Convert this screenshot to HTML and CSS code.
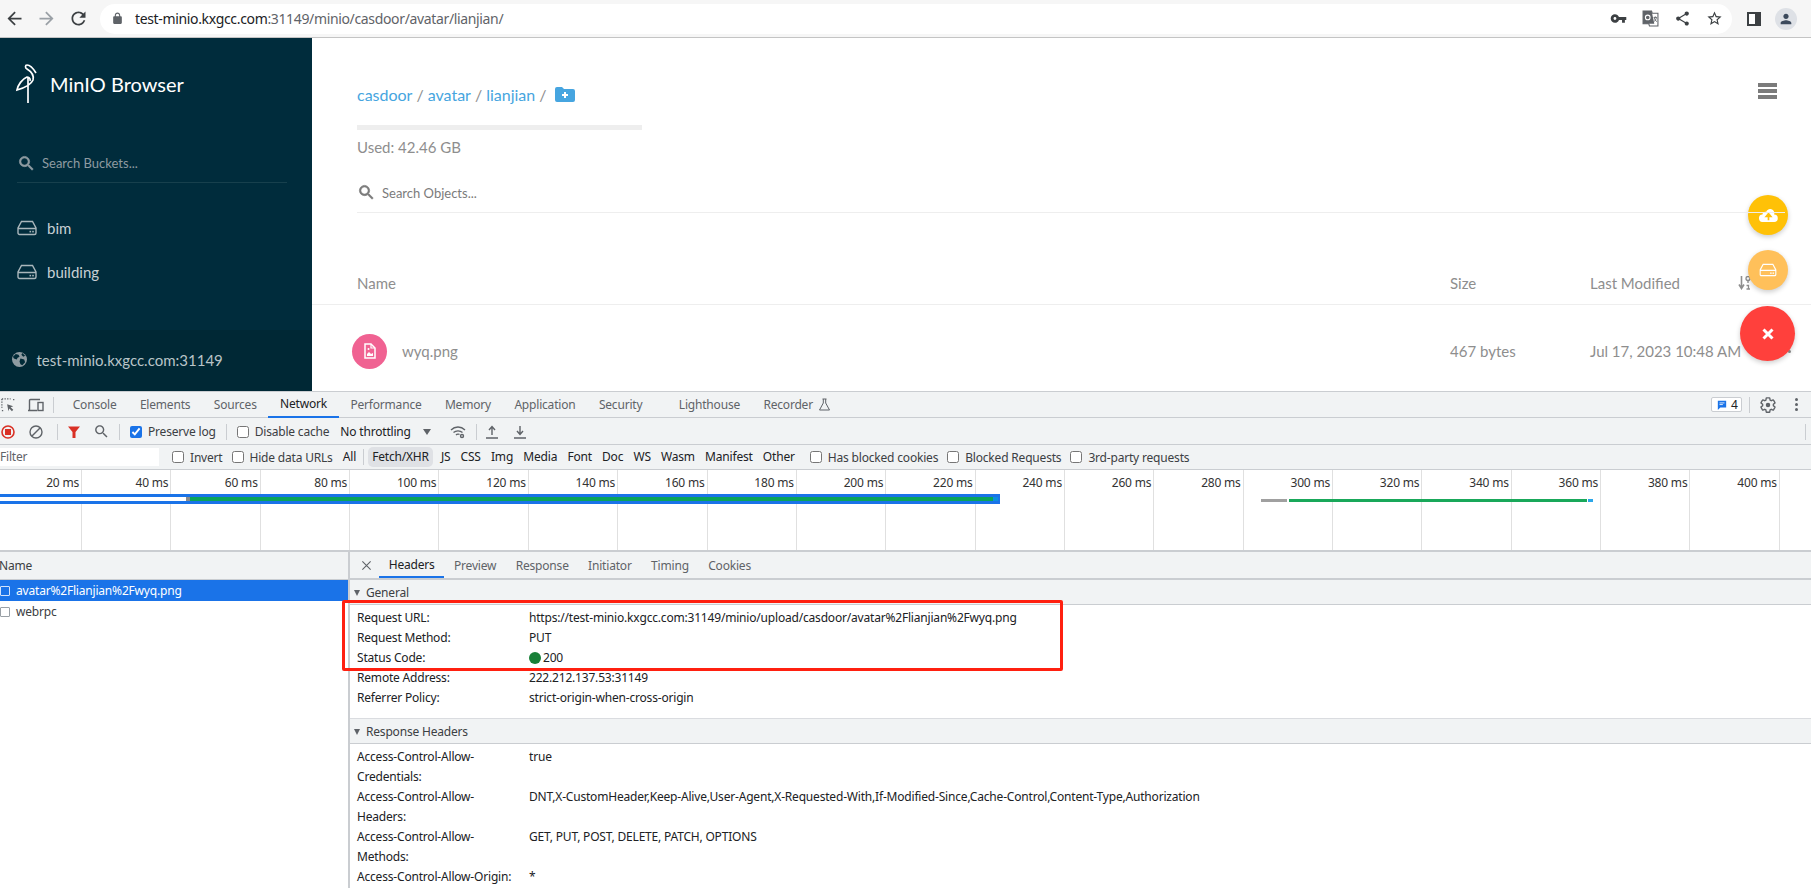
FILE: index.html
```html
<!DOCTYPE html>
<html lang="en">
<head>
    <meta charset="UTF-8">
    <meta name="viewport" content="width=device-width, initial-scale=1.0">
    <title>MinIO Browser</title>
    <link rel="stylesheet" href="styles.css">
</head>
<body>
    <svg class="defs" width="0" height="0">
        <symbol id="i-search" viewBox="0 0 24 24"><path d="M15.5 14h-.79l-.28-.27C15.41 12.59 16 11.11 16 9.5 16 5.91 13.09 3 9.5 3S3 5.91 3 9.5 5.91 16 9.5 16c1.61 0 3.09-.59 4.23-1.57l.27.28v.79l5 4.99L20.49 19l-4.99-5zm-6 0C7.01 14 5 11.99 5 9.5S7.01 5 9.5 5 14 7.01 14 9.5 11.99 14 9.5 14z"/></symbol>
        <symbol id="i-drive" viewBox="0 0 20 16"><path d="M4.5 1.5h11L19 8v5a1.5 1.5 0 0 1-1.5 1.5h-15A1.5 1.5 0 0 1 1 13V8zM1 8.5h18" fill="none" stroke="currentColor" stroke-width="1.4"/><rect x="12.5" y="10.8" width="1.6" height="1.6" fill="currentColor"/><rect x="15.2" y="10.8" width="1.6" height="1.6" fill="currentColor"/></symbol>
    </svg>

    <header class="chrome-bar">
        <svg class="chrome-icon" viewBox="0 0 24 24"><path d="M20 11H7.83l5.59-5.59L12 4l-8 8 8 8 1.41-1.41L7.83 13H20v-2z"/></svg>
        <svg class="chrome-icon off" viewBox="0 0 24 24"><path d="M4 11h12.17l-5.59-5.59L12 4l8 8-8 8-1.41-1.41L16.17 13H4v-2z"/></svg>
        <svg class="chrome-icon" viewBox="0 0 24 24"><path d="M17.65 6.35C16.2 4.9 14.21 4 12 4c-4.42 0-7.99 3.58-7.99 8s3.57 8 7.99 8c3.73 0 6.84-2.55 7.73-6h-2.08c-.82 2.33-3.04 4-5.65 4-3.31 0-6-2.69-6-6s2.69-6 6-6c1.66 0 3.14.69 4.22 1.78L13 11h7V4l-2.35 2.35z"/></svg>
        <div class="omnibox">
            <svg class="lock" viewBox="0 0 24 24"><path d="M18 8h-1V6c0-2.76-2.24-5-5-5S7 3.24 7 6v2H6c-1.1 0-2 .9-2 2v10c0 1.1.9 2 2 2h12c1.1 0 2-.9 2-2V10c0-1.1-.9-2-2-2zM9 6c0-1.66 1.34-3 3-3s3 1.34 3 3v2H9V6z"/></svg>
            <span class="url"><b>test-minio.kxgcc.com</b>:31149/minio/casdoor/avatar/lianjian/</span>
            <div class="omni-icons">
                <svg class="omni-icon" viewBox="0 0 24 24"><path d="M12.65 10C11.83 7.67 9.61 6 7 6c-3.31 0-6 2.69-6 6s2.69 6 6 6c2.61 0 4.83-1.67 5.65-4H17v4h4v-4h2v-4H12.65zM7 14c-1.1 0-2-.9-2-2s.9-2 2-2 2 .9 2 2-.9 2-2 2z"/></svg>
                <svg class="omni-icon" viewBox="0 0 16 16"><path d="M1 1h8l.6 2H15v12H7l-.6-2H1z" fill="#fff" stroke="#5f6368" stroke-width="1"/><path d="M1 1h8l2.6 12H1z" fill="#5f6368"/><circle cx="5.4" cy="7" r="2.2" fill="none" stroke="#fff" stroke-width="1"/><path d="M11 7h3M12.5 6v1M11.5 7c.3 2 1.5 3.4 2.6 4M13.6 7c-.3 2-1.5 3.4-2.4 4" fill="none" stroke="#5f6368" stroke-width=".8"/></svg>
                <svg class="omni-icon" viewBox="0 0 24 24"><path d="M18 16.08c-.76 0-1.44.3-1.96.77L8.91 12.7c.05-.23.09-.46.09-.7s-.04-.47-.09-.7l7.05-4.11c.54.5 1.25.81 2.04.81 1.66 0 3-1.34 3-3s-1.34-3-3-3-3 1.34-3 3c0 .24.04.47.09.7L8.04 9.81C7.5 9.31 6.79 9 6 9c-1.66 0-3 1.34-3 3s1.34 3 3 3c.79 0 1.5-.31 2.04-.81l7.12 4.16c-.05.21-.08.43-.08.65 0 1.61 1.31 2.92 2.92 2.92 1.61 0 2.92-1.31 2.92-2.92s-1.31-2.92-2.92-2.92z"/></svg>
                <svg class="omni-icon" viewBox="0 0 24 24"><path d="M22 9.24l-7.19-.62L12 2 9.19 8.63 2 9.24l5.46 4.73L5.82 21 12 17.27 18.18 21l-1.63-7.03L22 9.24zM12 15.4l-3.76 2.27 1-4.28-3.32-2.88 4.38-.38L12 6.1l1.71 4.04 4.38.38-3.32 2.88 1 4.28L12 15.4z"/></svg>
            </div>
        </div>
        <div class="side-panel-btn"><span></span></div>
        <div class="avatar">
            <svg viewBox="0 0 24 24"><path d="M12 12c2.21 0 4-1.79 4-4s-1.79-4-4-4-4 1.79-4 4 1.79 4 4 4zm0 2c-2.67 0-8 1.34-8 4v2h16v-2c0-2.66-5.33-4-8-4z"/></svg>
        </div>
    </header>

    <div class="app">
        <aside class="sidebar">
            <div class="brand">
                <svg class="logo" viewBox="0 0 24 44"><path d="M21 11C18 6 15 3 12 3c-2 0-2 3 0 4 5 3 7 7 6 11-2 5-9 8-16 10 1-5 5-11 10-13 1 0 4 1 3 4M13 16v25" fill="none" stroke="#fff" stroke-width="1.7"/></svg>
                <span>MinIO Browser</span>
            </div>
            <div class="bucket-search">
                <svg class="search-icon" viewBox="0 0 24 24"><use href="#i-search"/></svg>
                <span>Search Buckets...</span>
            </div>
            <ul class="buckets">
                <li><svg class="drive" viewBox="0 0 20 16"><use href="#i-drive"/></svg>bim</li>
                <li><svg class="drive" viewBox="0 0 20 16"><use href="#i-drive"/></svg>building</li>
            </ul>
            <div class="host">
                <svg class="globe" viewBox="0 0 16 16"><circle cx="8" cy="8" r="8" fill="#8e9ba1"/><path d="M4 2l3 1 1 2-2 1-1 2-3-1-1-2zM9 7l4 1 1 3-3 3-2-1-1-3zM11 1l3 3-2 1-2-2z" fill="#002a37"/></svg>
                <span>test-minio.kxgcc.com:31149</span>
            </div>
        </aside>

        <main class="content">
            <div class="head">
                <div class="crumbs">
                    <a>casdoor</a><i>/</i><a>avatar</a><i>/</i><a>lianjian</a><i>/</i>
                    <svg class="new-folder" viewBox="0 0 20 15"><path d="M0 2a2 2 0 0 1 2-2h5l2 2h9a2 2 0 0 1 2 2v9a2 2 0 0 1-2 2H2a2 2 0 0 1-2-2z" fill="#46a5e0"/><path d="M10 5v6M7 8h6" stroke="#fff" stroke-width="2"/></svg>
                </div>
                <div class="hamburger"><span></span><span></span><span></span></div>
            </div>
            <div class="usage-bar"></div>
            <div class="usage">Used: 42.46 GB</div>
            <div class="object-search">
                <svg class="search-icon" viewBox="0 0 24 24"><use href="#i-search"/></svg>
                <span>Search Objects...</span>
            </div>
            <div class="table-head">
                <div class="col-name">Name</div>
                <div class="col-size">Size</div>
                <div class="col-date">Last Modified</div>
                <svg class="sort" viewBox="0 0 13 14"><path d="M3.5 0v11M1 8.5l2.5 4 2.5-4" fill="none" stroke="#8e8e8e" stroke-width="1.6"/><circle cx="10" cy="2.5" r="2" fill="none" stroke="#8e8e8e" stroke-width="1.3"/><path d="M10 5v2M8.5 9.5h2V13M8.5 13H12" fill="none" stroke="#8e8e8e" stroke-width="1.3"/></svg>
            </div>
            <div class="table-row">
                <div class="col-name file">
                    <span class="file-icon">
                        <svg viewBox="0 0 12 16"><path d="M1 1h6l4 4v10H1z" fill="none" stroke="#fff" stroke-width="1.5"/><path d="M7 1v4h4" fill="none" stroke="#fff" stroke-width="1.2"/><path d="M3 13v-2l2-2 2 2 2-1v3z" fill="#fff"/><circle cx="4.5" cy="6" r="1" fill="#fff"/></svg>
                    </span>
                    <span>wyq.png</span>
                </div>
                <div class="col-size">467 bytes</div>
                <div class="col-date">Jul 17, 2023 10:48 AM</div>
                <span class="more-dot"></span>
            </div>

            <button class="fab fab-upload">
                <svg viewBox="0 0 20 14"><path d="M16 6a4.5 4.5 0 0 0-8.5-3A3.5 3.5 0 0 0 3.5 6 3.5 3.5 0 0 0 4 14h12a4 4 0 0 0 0-8z" fill="#fff"/><path d="M10 12V6M7.5 8L10 5l2.5 3z" stroke="#ffc107" stroke-width="1.8" fill="#ffc107"/></svg>
            </button>
            <button class="fab fab-bucket">
                <svg viewBox="0 0 20 16"><use href="#i-drive"/></svg>
            </button>
            <button class="fab fab-close">
                <svg viewBox="0 0 12 12"><path d="M1.5 1.5l9 9M10.5 1.5l-9 9" stroke="#fff" stroke-width="3"/></svg>
            </button>
        </main>
    </div>

    <section class="devtools">
        <div class="dt-tabs">
            <svg class="dt-icon" viewBox="0 0 16 16"><path d="M1 1h10M1 1v10" fill="none" stroke="#5f6368" stroke-width="1.5" stroke-dasharray="1.5 1.5"/><path d="M1 14.5h3M14.5 1v3" fill="none" stroke="#5f6368" stroke-width="1.5" stroke-dasharray="1.5 1.5"/><path d="M7 7l7 2.5-3 1 3 3-1.5 1.5-3-3-1 3z" fill="#5f6368"/></svg>
            <svg class="dt-icon device" viewBox="0 0 16 14"><path d="M1.5 12V2.5a1 1 0 0 1 1-1H12M0 12.5h9" fill="none" stroke="#5f6368" stroke-width="1.4"/><rect x="10" y="4.5" width="5" height="8" fill="none" stroke="#5f6368" stroke-width="1.4"/></svg>
            <span class="dt-sep"></span>
            <a class="dt-tab">Console</a>
            <a class="dt-tab">Elements</a>
            <a class="dt-tab">Sources</a>
            <a class="dt-tab active">Network</a>
            <a class="dt-tab">Performance</a>
            <a class="dt-tab">Memory</a>
            <a class="dt-tab">Application</a>
            <a class="dt-tab">Security</a>
            <a class="dt-tab lighthouse">Lighthouse</a>
            <a class="dt-tab">Recorder
                <svg class="flask" viewBox="0 0 12 13"><path d="M4 1h4M4.8 1v4L1 12h10L7.2 5V1" fill="none" stroke="#5f6368" stroke-width="1"/></svg>
            </a>
            <div class="dt-right">
                <span class="issues"><svg viewBox="0 0 12 12"><path d="M1 1h10v8H4l-3 3z" fill="#1a73e8"/><path d="M3 3.5h6M3 5.5h4" stroke="#fff"/></svg>4</span>
                <span class="dt-sep"></span>
                <svg class="gear" viewBox="0 0 24 24"><path d="M19.14 12.94c.04-.3.06-.61.06-.94 0-.32-.02-.64-.07-.94l2.03-1.58c.18-.14.23-.41.12-.61l-1.92-3.32c-.12-.22-.37-.29-.59-.22l-2.39.96c-.5-.38-1.03-.7-1.62-.94l-.36-2.54c-.04-.24-.24-.41-.48-.41h-3.84c-.24 0-.43.17-.47.41l-.36 2.54c-.59.24-1.13.57-1.62.94l-2.39-.96c-.22-.08-.47 0-.59.22L2.74 8.87c-.12.21-.08.47.12.61l2.03 1.58c-.05.3-.09.63-.09.94s.02.64.07.94l-2.03 1.58c-.18.14-.23.41-.12.61l1.92 3.32c.12.22.37.29.59.22l2.39-.96c.5.38 1.03.7 1.62.94l.36 2.54c.05.24.24.41.48.41h3.84c.24 0 .44-.17.47-.41l.36-2.54c.59-.24 1.13-.56 1.62-.94l2.39.96c.22.08.47 0 .59-.22l1.92-3.32c.12-.22.07-.47-.12-.61l-2.01-1.58z" fill="none" stroke="#5f6368" stroke-width="1.8"/><circle cx="12" cy="12" r="3" fill="#5f6368"/></svg>
                <span class="kebab"><span></span><span></span><span></span></span>
            </div>
        </div>

        <div class="dt-toolbar">
            <svg class="tb-icon record" viewBox="0 0 14 14"><circle cx="7" cy="7" r="6" fill="none" stroke="#d93025" stroke-width="1.6"/><rect x="4" y="4" width="6" height="6" fill="#d93025"/></svg>
            <svg class="tb-icon" viewBox="0 0 14 14"><circle cx="7" cy="7" r="6" fill="none" stroke="#5f6368" stroke-width="1.4"/><path d="M3 11l8-8" stroke="#5f6368" stroke-width="1.4"/></svg>
            <span class="dt-sep"></span>
            <svg class="tb-icon funnel" viewBox="0 0 14 14"><path d="M1 1.5h12L8.5 7v6h-3V7z" fill="#d93025"/></svg>
            <svg class="tb-icon lens" viewBox="0 0 24 24"><use href="#i-search"/></svg>
            <span class="dt-sep"></span>
            <label class="check"><input type="checkbox" checked>Preserve log</label>
            <span class="dt-sep"></span>
            <label class="check"><input type="checkbox">Disable cache</label>
            <span class="throttle">No throttling</span>
            <span class="caret"></span>
            <svg class="tb-icon wifi" viewBox="0 0 16 14"><path d="M1 5c4-4 10-4 14 0M3.5 7.5c2.5-2.3 6.5-2.3 9 0M6 10c1-1 3-1 3.5-.5" fill="none" stroke="#5f6368" stroke-width="1.3"/><circle cx="12" cy="11" r="2.2" fill="#5f6368"/><circle cx="12" cy="11" r=".8" fill="#f1f3f4"/></svg>
            <span class="dt-sep"></span>
            <svg class="tb-icon" viewBox="0 0 14 14"><path d="M7 10V2M4 5l3-3.5L10 5M1 13h12" fill="none" stroke="#5f6368" stroke-width="1.4"/></svg>
            <svg class="tb-icon" viewBox="0 0 14 14"><path d="M7 1v8M4 6l3 3.5L10 6M1 13h12" fill="none" stroke="#5f6368" stroke-width="1.4"/></svg>
            <span class="dt-sep end"></span>
        </div>

        <div class="dt-filter">
            <div class="filter-input">Filter</div>
            <label class="check"><input type="checkbox">Invert</label>
            <label class="check"><input type="checkbox">Hide data URLs</label>
            <div class="types">
                <span>All</span><span class="dt-sep"></span><span class="on">Fetch/XHR</span><span>JS</span><span>CSS</span><span>Img</span><span>Media</span><span>Font</span><span>Doc</span><span>WS</span><span>Wasm</span><span>Manifest</span><span>Other</span>
            </div>
            <label class="check"><input type="checkbox">Has blocked cookies</label>
            <label class="check"><input type="checkbox">Blocked Requests</label>
            <label class="check"><input type="checkbox">3rd-party requests</label>
        </div>

        <div class="timeline">
            <div class="tick">20 ms</div><div class="tick">40 ms</div><div class="tick">60 ms</div><div class="tick">80 ms</div><div class="tick">100 ms</div><div class="tick">120 ms</div><div class="tick">140 ms</div><div class="tick">160 ms</div><div class="tick">180 ms</div><div class="tick">200 ms</div><div class="tick">220 ms</div><div class="tick">240 ms</div><div class="tick">260 ms</div><div class="tick">280 ms</div><div class="tick">300 ms</div><div class="tick">320 ms</div><div class="tick">340 ms</div><div class="tick">360 ms</div><div class="tick">380 ms</div><div class="tick">400 ms</div>
            <!-- request bars sit on the time axis -->
            <div class="req-selected">
                <span class="seg-wait"></span><span class="seg-stall"></span><span class="seg-ttfb"></span><span class="seg-down"></span>
            </div>
            <div class="req-other">
                <span class="thin-grey"></span><span class="thin-green"></span><span class="thin-blue"></span>
            </div>
        </div>

        <div class="panes">
            <div class="req-list">
                <div class="list-head">Name</div>
                <div class="list-row selected"><span class="row-box"></span>avatar%2Flianjian%2Fwyq.png</div>
                <div class="list-row"><span class="row-box"></span>webrpc</div>
            </div>
            <div class="detail">
                <div class="detail-tabs">
                    <svg class="close-x" viewBox="0 0 12 12"><path d="M1.5 1.5l9 9M10.5 1.5l-9 9" stroke="#5f6368" stroke-width="1.2"/></svg>
                    <a class="detail-tab active">Headers</a>
                    <a class="detail-tab">Preview</a>
                    <a class="detail-tab">Response</a>
                    <a class="detail-tab">Initiator</a>
                    <a class="detail-tab">Timing</a>
                    <a class="detail-tab">Cookies</a>
                </div>
                <div class="sec-title first">General</div>
                <div class="sec-body">
                    <div class="kv"><div class="k">Request URL:</div><div class="v">https://test-minio.kxgcc.com:31149/minio/upload/casdoor/avatar%2Flianjian%2Fwyq.png</div></div>
                    <div class="kv"><div class="k">Request Method:</div><div class="v">PUT</div></div>
                    <div class="kv"><div class="k">Status Code:</div><div class="v"><span class="status-dot"></span>200</div></div>
                    <div class="kv"><div class="k">Remote Address:</div><div class="v">222.212.137.53:31149</div></div>
                    <div class="kv"><div class="k">Referrer Policy:</div><div class="v">strict-origin-when-cross-origin</div></div>
                </div>
                <div class="sec-title">Response Headers</div>
                <div class="sec-body">
                    <div class="kv"><div class="k">Access-Control-Allow-Credentials:</div><div class="v">true</div></div>
                    <div class="kv"><div class="k">Access-Control-Allow-Headers:</div><div class="v">DNT,X-CustomHeader,Keep-Alive,User-Agent,X-Requested-With,If-Modified-Since,Cache-Control,Content-Type,Authorization</div></div>
                    <div class="kv"><div class="k">Access-Control-Allow-Methods:</div><div class="v">GET, PUT, POST, DELETE, PATCH, OPTIONS</div></div>
                    <div class="kv"><div class="k">Access-Control-Allow-Origin:</div><div class="v">*</div></div>
                </div>
                <div class="red-box"></div>
            </div>
        </div>
    </section>
</body>
</html>
```

FILE: styles.css
```css
* {
    margin: 0;
    padding: 0;
    box-sizing: border-box;
}

html, body {
    width: 1811px;
    height: 888px;
    overflow: hidden;
    background-color: white;
}

.defs {
    position: absolute;
}

/* browser toolbar */
.chrome-bar {
    display: flex;
    align-items: center;
    height: 38px;
    padding: 0 14px 0 3.5px;
    background-color: #f6f6f6;
    border-bottom: 1px solid #c4c4c4;
    font-family: "Noto Sans", sans-serif;
}

.chrome-icon {
    width: 21px;
    height: 21px;
    margin-right: 11px;
    fill: #3c4043;
}

.chrome-icon.off {
    fill: #9aa0a6;
}

.omnibox {
    display: flex;
    align-items: center;
    width: 1632px;
    height: 30px;
    margin-left: 0.5px;
    padding-left: 11px;
    background-color: white;
    border-radius: 15px;
}

.lock {
    width: 13px;
    height: 13px;
    fill: #5f6368;
}

.url {
    margin-left: 11px;
    font-size: 14px;
    color: #5f6368;
    letter-spacing: -0.35px;
}

.url b {
    font-weight: 400;
    color: #202124;
}

.omni-icons {
    display: flex;
    gap: 15px;
    margin-left: auto;
    margin-right: 9px;
}

.omni-icon {
    width: 17px;
    height: 17px;
    fill: #3c4043;
}

.side-panel-btn {
    width: 14px;
    height: 14px;
    margin-left: 15px;
    padding: 2px 6px 2px 2px;
    background-color: #3c4043;
}

.side-panel-btn span {
    display: block;
    height: 100%;
    background-color: white;
}

.avatar {
    width: 22px;
    height: 22px;
    margin-left: 14px;
    padding: 3px;
    background-color: #dee1e6;
    border-radius: 50%;
}

.avatar svg {
    display: block;
    fill: #3c4a5c;
}

/* minio app */
.app {
    display: flex;
    height: 353px;
    font-family: Lato, sans-serif;
}

.sidebar {
    display: flex;
    flex-direction: column;
    flex: 0 0 312px;
    background-color: #002c3c;
    color: white;
}

.brand {
    display: flex;
    align-items: center;
    height: 44px;
    margin-top: 24px;
    padding-left: 15px;
    font-size: 20px;
}

.logo {
    width: 24px;
    height: 44px;
    margin-right: 11px;
}

.search-icon {
    width: 19px;
    height: 19px;
    fill: #8e8e8e;
    stroke: #8e8e8e;
    stroke-width: 0.8;
}

.bucket-search {
    display: flex;
    align-items: center;
    gap: 6px;
    height: 37px;
    margin: 40px 25px 0 17px;
    padding-bottom: 2px;
    border-bottom: 1px solid #17404d;
    font-size: 13px;
    color: #8e9ba1;
}

.bucket-search .search-icon {
    fill: #8e9ba1;
    stroke: #8e9ba1;
}

.buckets {
    margin-top: 23px;
    list-style: none;
}

.buckets li {
    display: flex;
    align-items: center;
    height: 44px;
    padding-left: 17px;
    font-size: 15px;
    color: #c7d0d4;
}

.drive {
    width: 20px;
    height: 16px;
    margin-right: 10px;
    color: #a9b6bb;
}

.host {
    display: flex;
    align-items: center;
    gap: 9.5px;
    height: 61px;
    margin-top: auto;
    padding: 0 0 2px 12px;
    background-color: #002835;
    font-size: 15px;
    color: #b9c4c8;
}

.globe {
    width: 15px;
    height: 15px;
}

.content {
    position: relative;
    flex: 1;
    overflow: hidden;
    color: #8e8e8e;
}

.head {
    display: flex;
    justify-content: space-between;
    padding: 45px 34px 0 45px;
}

.crumbs {
    display: flex;
    align-items: center;
    height: 24px;
    padding-bottom: 2px;
    font-size: 16px;
    color: #8e8e8e;
}

.crumbs a {
    color: #46a5e0;
}

.crumbs i {
    margin: 0 4px;
    font-style: normal;
}

.new-folder {
    width: 20px;
    height: 15px;
    margin-left: 5px;
}

.hamburger {
    display: flex;
    flex-direction: column;
    gap: 2.5px;
    width: 19px;
}

.hamburger span {
    height: 3.6px;
    background-color: #7b7b7b;
}

.usage-bar {
    width: 285px;
    height: 5px;
    margin: 18px 0 0 45px;
    background-color: #eee;
}

.usage {
    margin: 7px 0 0 45px;
    font-size: 15px;
    line-height: 20px;
}

.object-search {
    position: relative;
    z-index: 2;
    display: flex;
    align-items: center;
    gap: 6px;
    height: 38px;
    margin: 18px 26px 0 45px;
    padding-bottom: 2px;
    border-bottom: 1px solid #eee;
    font-size: 13px;
    color: #7b7b7b;
}

.object-search .search-icon {
    fill: #7b7b7b;
    stroke: #7b7b7b;
}

.table-head,
.table-row {
    display: flex;
    align-items: center;
    font-size: 15px;
}

.table-head {
    height: 92px;
    padding-top: 48px;
    border-bottom: 1px solid #eee;
}

.table-row {
    height: 92px;
}

.col-name {
    flex: 0 0 1138px;
    padding-left: 45px;
}

.col-name.file {
    display: flex;
    align-items: center;
    gap: 15px;
    padding-left: 40px;
}

.col-size {
    flex: 0 0 140px;
}

.col-date {
    flex: 0 0 148px;
    white-space: nowrap;
}

.sort {
    width: 13px;
    height: 14px;
}

.file-icon {
    display: flex;
    align-items: center;
    justify-content: center;
    width: 35px;
    height: 35px;
    background-color: #f06292;
    border-radius: 50%;
}

.file-icon svg {
    width: 12px;
    height: 16px;
}

.more-dot {
    width: 3px;
    height: 3px;
    margin-left: auto;
    margin-right: 20px;
    background-color: #8e8e8e;
    border-radius: 50%;
}

.fab {
    position: absolute;
    z-index: 1;
    display: flex;
    align-items: center;
    justify-content: center;
    right: 23px;
    width: 40px;
    height: 40px;
    border: none;
    border-radius: 50%;
    color: white;
    box-shadow: 0 2px 5px rgba(0,0,0,0.2);
}

.fab-upload {
    top: 157px;
    background-color: #ffc107;
}

.fab-upload svg {
    width: 19px;
    height: 13px;
}

.fab-bucket {
    top: 212px;
    background-color: #ffc05a;
}

.fab-bucket svg {
    width: 18px;
    height: 14px;
}

.fab-close {
    z-index: 3;
    top: 268px;
    right: 16px;
    width: 55px;
    height: 55px;
    background-color: #ff403c;
}

.fab-close svg {
    width: 12px;
    height: 12px;
}

/* devtools */
.devtools {
    display: flex;
    flex-direction: column;
    height: 497px;
    font-family: "Noto Sans", sans-serif;
    font-size: 12px;
    color: #202124;
    letter-spacing: -0.19px;
}

.dt-tabs,
.dt-toolbar,
.dt-filter {
    display: flex;
    align-items: center;
    background-color: #f1f3f4;
    border-bottom: 1px solid #cacdd1;
}

.dt-tabs {
    height: 27px;
    border-top: 1px solid #cacdd1;
}

.dt-icon {
    width: 14px;
    height: 14px;
    margin-left: 1px;
}

.dt-icon.device {
    width: 16px;
    margin-left: 13px;
}

.dt-sep {
    flex: none;
    width: 1px;
    height: 16px;
    background-color: #cacdd1;
}

.dt-tabs > .dt-sep {
    margin: 0 7px 0 9px;
}

.dt-tab {
    display: flex;
    align-items: center;
    height: 26px;
    padding: 0 11.7px;
    color: #5f6368;
}

.dt-tab.active {
    color: #202124;
    border-bottom: 2px solid #1a73e8;
}

.dt-tab.lighthouse {
    margin-left: 13px;
}

.flask {
    width: 13px;
    height: 13px;
    margin-left: 5px;
}

.dt-right {
    display: flex;
    align-items: center;
    margin-left: auto;
}

.issues {
    display: flex;
    align-items: center;
    gap: 4px;
    width: 31px;
    height: 15px;
    padding-left: 5px;
    border: 1px solid #cacdd1;
    border-radius: 2px;
    background-color: white;
    font-size: 12px;
}

.issues svg {
    width: 10px;
    height: 10px;
}

.dt-right .dt-sep {
    margin: 0 9px 0 7px;
}

.gear {
    width: 18px;
    height: 18px;
}

.kebab {
    display: flex;
    flex-direction: column;
    gap: 2px;
    margin: 0 13px 0 18px;
}

.kebab span {
    width: 3px;
    height: 3px;
    background-color: #5f6368;
    border-radius: 50%;
}

.dt-toolbar {
    height: 27px;
    padding-top: 1px;
}

.tb-icon {
    width: 14px;
    height: 14px;
    margin-right: 14px;
    fill: #5f6368;
}

.record {
    margin-left: 1px;
}

.dt-toolbar .dt-sep {
    margin-right: 10px;
}

.funnel {
    margin-left: -1px;
    margin-right: 12px;
}

.lens {
    width: 17px;
    height: 17px;
    margin-right: 9px;
}

.check {
    display: flex;
    flex: none;
    align-items: center;
    gap: 6px;
    color: #3c4043;
}

.check input {
    width: 12px;
    height: 12px;
    accent-color: #1a73e8;
}

.dt-toolbar .check {
    margin-right: 10px;
}

.throttle {
    margin-left: 1px;
}

.caret {
    width: 0;
    height: 0;
    margin: 0 19px 0 12.5px;
    border-left: 4px solid transparent;
    border-right: 4px solid transparent;
    border-top: 6px solid #5f6368;
}

.wifi {
    width: 16px;
    margin-right: 10px;
}

.dt-toolbar .wifi + .dt-sep {
    margin-right: 8px;
}

.dt-toolbar .dt-sep.end {
    margin-left: auto;
    margin-right: 5px;
}

.dt-filter {
    height: 25px;
}

.filter-input {
    width: 159px;
    height: 18px;
    line-height: 18px;
    background-color: white;
    color: #5f6368;
}

.dt-filter .check {
    margin-left: 13px;
}

.dt-filter .check + .check {
    margin-left: 9px;
}

.dt-filter .types + .check {
    margin-left: 10px;
}

.types {
    display: flex;
    align-items: center;
    margin-left: 5px;
}

.types span {
    padding: 0 5.1px;
    line-height: 20px;
    white-space: nowrap;
}

.types .dt-sep {
    padding: 0;
    margin: 0 4px 0 2px;
}

.types .on {
    padding: 0 4px;
    background-color: #dfe1e5;
    border-radius: 5px;
    margin-right: 3px;
}

.timeline {
    position: relative;
    display: flex;
    flex: 0 0 82px;
    border-bottom: 2px solid #cacdd1;
    color: #333;
}

.tick {
    flex: 0 0 89.37px;
    padding: 4px 2px 0 0;
    border-right: 1px solid #e0e0e0;
    text-align: right;
}

.tick:first-child {
    flex-basis: 82px;
}

.req-selected {
    position: absolute;
    left: 0;
    top: 24px;
    display: flex;
    width: 1000px;
    height: 10px;
    padding: 3px 2px 3px 0;
    background-color: #1a73e8;
}

.seg-wait { width: 186px; background-color: white; }
.seg-stall { width: 4px; background-color: #8a8a8a; }
.seg-ttfb { width: 803px; background-color: #0aa45a; }
.seg-down { width: 5px; background-color: #0a8fe0; }

.req-other {
    position: absolute;
    left: 1261px;
    top: 29px;
    display: flex;
    height: 3px;
}

.thin-grey { width: 26px; margin-right: 2px; background-color: #a0a0a0; }
.thin-green { width: 298px; margin-right: 1px; background-color: #19a85a; }
.thin-blue { width: 5px; background-color: #2ba6e8; }

.panes {
    display: flex;
    flex: 1;
    min-height: 0;
}

.req-list {
    flex: 0 0 348px;
}

.list-head {
    height: 28px;
    line-height: 28px;
    background-color: #f1f3f4;
    border-bottom: 1px solid #cacdd1;
    color: #3c4043;
    text-indent: -1px;
}

.list-row {
    display: flex;
    align-items: center;
    gap: 6px;
    height: 21px;
    color: #3c4043;
}

.list-row.selected {
    background-color: #1a73e8;
    color: white;
}

.row-box {
    flex: none;
    width: 10px;
    height: 10px;
    border: 1px solid #9aa0a6;
    border-radius: 1px;
}

.selected .row-box {
    border-color: #d2e3fc;
}

.detail {
    position: relative;
    flex: 1;
    border-left: 2px solid #cacdd1;
}

.detail-tabs {
    display: flex;
    align-items: center;
    height: 28px;
    background-color: #f1f3f4;
    border-bottom: 2px solid #cacdd1;
    padding-left: 11px;
    color: #5f6368;
}

.close-x {
    width: 11px;
    height: 11px;
    margin-right: 7px;
}

.detail-tab {
    display: flex;
    align-items: center;
    height: 26px;
    padding: 0 9.7px;
}

.detail-tab.active {
    color: #202124;
    border-bottom: 2px solid #1a73e8;
}

.sec-title {
    position: relative;
    height: 26px;
    padding-left: 16px;
    line-height: 26px;
    background-color: #f1f3f4;
    border-top: 1px solid #dadce0;
    border-bottom: 1px solid #cacdd1;
    color: #3c4043;
}

.sec-title.first {
    border-top: none;
    height: 25px;
    line-height: 26px;
}

.sec-title::before {
    content: "";
    position: absolute;
    left: 4px;
    top: 10px;
    border-left: 3.5px solid transparent;
    border-right: 3.5px solid transparent;
    border-top: 6px solid #5f6368;
}

.sec-body {
    padding: 3px 0 10px 7px;
}

.kv {
    display: flex;
    line-height: 20px;
    color: #202124;
}

.k {
    flex: 0 0 172px;
    padding-right: 15px;
}

.status-dot {
    display: inline-block;
    width: 12px;
    height: 12px;
    margin-right: 2px;
    vertical-align: -2px;
    background-color: #188038;
    border-radius: 50%;
}

.red-box {
    position: absolute;
    left: -8px;
    top: 48px;
    width: 721px;
    height: 71px;
    border: 3px solid #ff2010;
    border-radius: 2px;
}
```
